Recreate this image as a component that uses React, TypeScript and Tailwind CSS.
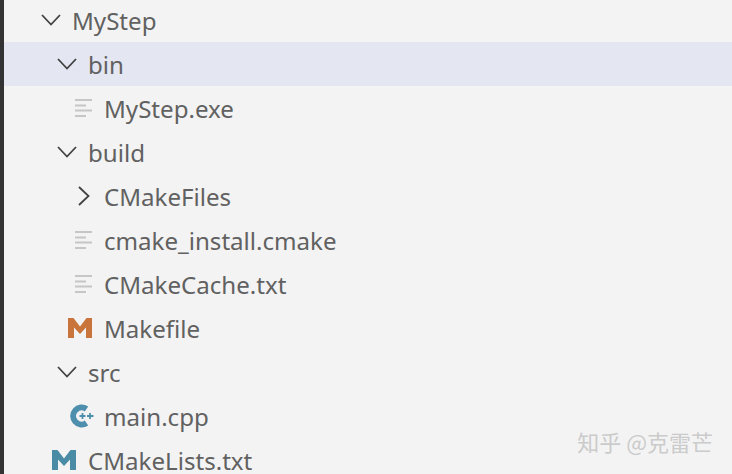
type IconKind = "open" | "closed" | "lines" | "orangeM" | "blueM" | "cpp";

type Row = {
  label: string;
  level: 0 | 1 | 2;
  icon: IconKind;
  active?: boolean;
};

const ROWS: Row[] = [
  { label: "MyStep", level: 0, icon: "open" },
  { label: "bin", level: 1, icon: "open", active: true },
  { label: "MyStep.exe", level: 2, icon: "lines" },
  { label: "build", level: 1, icon: "open" },
  { label: "CMakeFiles", level: 2, icon: "closed" },
  { label: "cmake_install.cmake", level: 2, icon: "lines" },
  { label: "CMakeCache.txt", level: 2, icon: "lines" },
  { label: "Makefile", level: 2, icon: "orangeM" },
  { label: "src", level: 1, icon: "open" },
  { label: "main.cpp", level: 2, icon: "cpp" },
  { label: "CMakeLists.txt", level: 1, icon: "blueM" },
];

const LEVEL_PADDING = { 0: "pl-[36px]", 1: "pl-[52px]", 2: "pl-[68px]" };

function OpenChevron() {
  return (
    <svg width="22" height="14" viewBox="0 0 22 14" fill="none" stroke="#424242" strokeWidth="1.8">
      <path d="M2 2l9 9.500L20 2" />
    </svg>
  );
}

function ClosedChevron() {
  return (
    <svg width="14" height="22" viewBox="0 0 14 22" fill="none" stroke="#424242" strokeWidth="1.8">
      <path d="M2 2l9.500 9L2 20" />
    </svg>
  );
}

function LinesIcon() {
  return (
    <svg width="19" height="20" viewBox="0 0 19 20" fill="none" stroke="#c6c6c6" strokeWidth="2">
      <path d="M1 2h17M1 7.500h11M1 12.500h17M1 18h11" />
    </svg>
  );
}

function MIcon({ color }: { color: string }) {
  return (
    <svg width="24" height="22" viewBox="0 0 24 22" fill={color}>
      <path d="M0 21V1h5.500l6.500 8.500L18.500 1H24v20h-6V10.500L12 17 6 10.500V21z" />
    </svg>
  );
}

function CppIcon() {
  return (
    <svg width="24" height="24" viewBox="0 0 24 24">
      <path d="M16.500 5A8.500 8.500 0 1 0 16.500 19" fill="none" stroke="#4f8fae" strokeWidth="6" />
      <path d="M9.500 12h6M12.500 9v6M17 12h6.500M20 9v6" stroke="#4f8fae" strokeWidth="1.800" />
    </svg>
  );
}

function RowIcon({ icon }: { icon: IconKind }) {
  if (icon === "open") return <OpenChevron />;
  if (icon === "closed")
    return (
      <div className="ml-[5px]">
        <ClosedChevron />
      </div>
    );
  if (icon === "lines")
    return (
      <div className="ml-[2px]">
        <LinesIcon />
      </div>
    );
  if (icon === "orangeM")
    return (
      <div className="-ml-[4px]">
        <MIcon color="#c9743a" />
      </div>
    );
  if (icon === "blueM")
    return (
      <div className="-ml-[4px]">
        <MIcon color="#4a8ba5" />
      </div>
    );
  return (
    <div className="-ml-[2px]">
      <CppIcon />
    </div>
  );
}

export default function App() {
  return (
    <div className="flex h-[474px] w-[732px] overflow-hidden bg-[#f3f3f3] font-['Noto_Sans','Open_Sans',sans-serif]">
      <div className="w-[4px] shrink-0 bg-[#333333]" />
      <div className="relative -mt-[2px] flex-1">
        {ROWS.map((row) => (
          <div
            key={row.label}
            className={`flex h-[44px] items-center ${LEVEL_PADDING[row.level]} ${row.active ? "bg-[#e4e6f1]" : ""}`}
          >
            <div className="flex w-[32px] shrink-0 items-center">
              <RowIcon icon={row.icon} />
            </div>
            <span className="pt-[2px] text-[24.1px] leading-none text-[#616161]">{row.label}</span>
          </div>
        ))}
        <div className="absolute bottom-[22px] right-[19px] text-[22px] leading-none text-[#cbcbcb] font-['Noto_Sans_CJK_SC',sans-serif]">
          知乎 @克雷芒
        </div>
      </div>
    </div>
  );
}
